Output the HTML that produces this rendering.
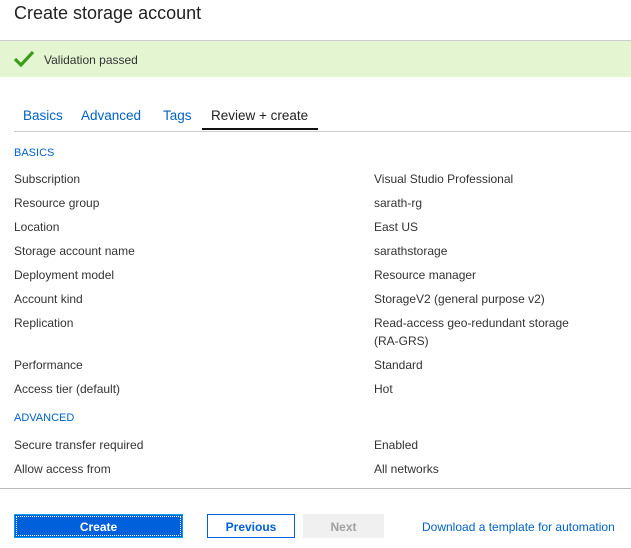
<!DOCTYPE html>
<html><head><style>
body{margin:0;width:631px;height:548px;background:#fff;font-family:"Segoe UI","Liberation Sans",sans-serif;color:#333;position:relative;overflow:hidden}
.a{position:absolute;white-space:nowrap}
.t{font-size:12px;line-height:16px}
.h{font-size:11px;color:#0062c8;line-height:14px}
</style></head><body>
<div class="a" style="left:14px;top:0;font-size:18px;line-height:26px;color:#222">Create storage account</div>
<div class="a" style="left:0;top:40px;width:631px;height:1px;background:#ccc"></div>
<div class="a" style="left:0;top:41px;width:631px;height:36px;background:#e3f5d1"></div>
<svg class="a" style="left:13px;top:50px" width="22" height="18" viewBox="0 0 22 18"><path d="M2 9 L8 15 L20 2" fill="none" stroke="#3f9b1a" stroke-width="3.2"/></svg>
<div class="a t" style="left:44px;top:52px;color:#333">Validation passed</div>
<div class="a" style="left:14px;top:131px;width:617px;height:1px;background:#ccc"></div>
<div class="a" style="left:23px;top:108px;font-size:13.5px;color:#0062c8">Basics</div>
<div class="a" style="left:81px;top:108px;font-size:13.5px;color:#0062c8">Advanced</div>
<div class="a" style="left:163px;top:108px;font-size:13.5px;color:#0062c8">Tags</div>
<div class="a" style="left:211px;top:108px;font-size:13.5px;color:#222">Review + create</div>
<div class="a" style="left:202px;top:128px;width:116px;height:2px;background:#111"></div>
<div class="a h" style="left:14px;top:146px">BASICS</div>
<div class="a t" style="left:14px;top:171px">Subscription</div><div class="a t" style="left:374px;top:171px">Visual Studio Professional</div>
<div class="a t" style="left:14px;top:195px">Resource group</div><div class="a t" style="left:374px;top:195px">sarath-rg</div>
<div class="a t" style="left:14px;top:219px">Location</div><div class="a t" style="left:374px;top:219px">East US</div>
<div class="a t" style="left:14px;top:243px">Storage account name</div><div class="a t" style="left:374px;top:243px">sarathstorage</div>
<div class="a t" style="left:14px;top:267px">Deployment model</div><div class="a t" style="left:374px;top:267px">Resource manager</div>
<div class="a t" style="left:14px;top:291px">Account kind</div><div class="a t" style="left:374px;top:291px">StorageV2 (general purpose v2)</div>
<div class="a t" style="left:14px;top:315px">Replication</div><div class="a t" style="left:374px;top:315px">Read-access geo-redundant storage<br><span style="line-height:20px">(RA-GRS)</span></div>
<div class="a t" style="left:14px;top:357px">Performance</div><div class="a t" style="left:374px;top:357px">Standard</div>
<div class="a t" style="left:14px;top:381px">Access tier (default)</div><div class="a t" style="left:374px;top:381px">Hot</div>
<div class="a h" style="left:14px;top:411px">ADVANCED</div>
<div class="a t" style="left:14px;top:437px">Secure transfer required</div><div class="a t" style="left:374px;top:437px">Enabled</div>
<div class="a t" style="left:14px;top:461px">Allow access from</div><div class="a t" style="left:374px;top:461px">All networks</div>
<div class="a" style="left:0;top:488px;width:631px;height:1px;background:#bbb"></div>
<div class="a" style="left:14px;top:514px;width:169px;height:24px;background:#0060db;border:1px solid #0aa0ee;box-sizing:border-box"></div>
<div class="a" style="left:16px;top:516px;width:165px;height:20px;border:1px dotted #fff;box-sizing:border-box;color:#fff;font-size:12px;font-weight:bold;text-align:center;line-height:20px">Create</div>
<div class="a" style="left:207px;top:514px;width:88px;height:24px;border:1px solid #0060db;box-sizing:border-box;color:#0060db;font-size:12px;font-weight:bold;text-align:center;line-height:24px">Previous</div>
<div class="a" style="left:303px;top:514px;width:81px;height:24px;background:#f0f0f0;color:#a0a0a0;font-size:12px;font-weight:bold;text-align:center;line-height:26px">Next</div>
<div class="a t" style="left:422px;top:519px;color:#0062c8">Download a template for automation</div>
</body></html>
